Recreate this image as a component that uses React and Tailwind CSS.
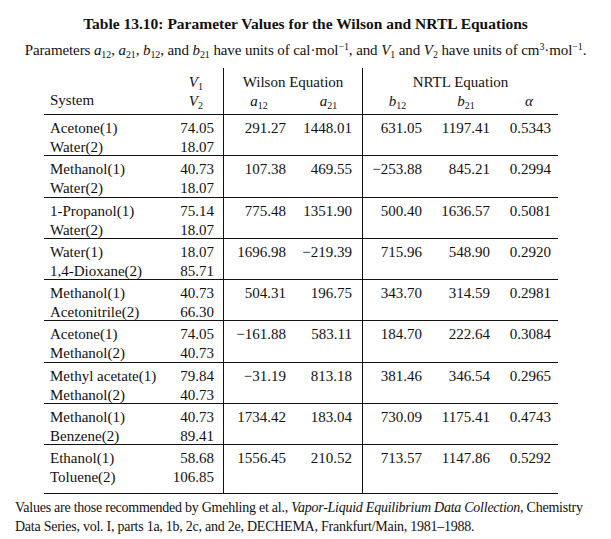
const ROWS = [
  { sys: ['Acetone(1)', 'Water(2)'], v: ['74.05', '18.07'], vals: ['291.27', '1448.01', '631.05', '1197.41', '0.5343'] },
  { sys: ['Methanol(1)', 'Water(2)'], v: ['40.73', '18.07'], vals: ['107.38', '469.55', '−253.88', '845.21', '0.2994'] },
  { sys: ['1-Propanol(1)', 'Water(2)'], v: ['75.14', '18.07'], vals: ['775.48', '1351.90', '500.40', '1636.57', '0.5081'] },
  { sys: ['Water(1)', '1,4-Dioxane(2)'], v: ['18.07', '85.71'], vals: ['1696.98', '−219.39', '715.96', '548.90', '0.2920'] },
  { sys: ['Methanol(1)', 'Acetonitrile(2)'], v: ['40.73', '66.30'], vals: ['504.31', '196.75', '343.70', '314.59', '0.2981'] },
  { sys: ['Acetone(1)', 'Methanol(2)'], v: ['74.05', '40.73'], vals: ['−161.88', '583.11', '184.70', '222.64', '0.3084'] },
  { sys: ['Methyl acetate(1)', 'Methanol(2)'], v: ['79.84', '40.73'], vals: ['−31.19', '813.18', '381.46', '346.54', '0.2965'] },
  { sys: ['Methanol(1)', 'Benzene(2)'], v: ['40.73', '89.41'], vals: ['1734.42', '183.04', '730.09', '1175.41', '0.4743'] },
  { sys: ['Ethanol(1)', 'Toluene(2)'], v: ['58.68', '106.85'], vals: ['1556.45', '210.52', '713.57', '1147.86', '0.5292'] },
];

// right padding of each value column, so numbers end where the print has them
const VAL_PAD = ['pr-[8px]', 'pr-[10px] border-r border-[#111]', 'pr-[10px]', 'pr-[10px]', 'pr-[7px]'];

const GRID = 'grid grid-cols-[116px_64px_70px_69px_69px_68px_58px]';

function Sym({ base, sub }) {
  return (
    <span>
      <i>{base}</i>
      <sub className="text-[10px] not-italic">{sub}</sub>
    </span>
  );
}

export default function App() {
  return (
    <div className="min-h-[539px] w-[611px] bg-white pt-[14px] text-[#111] font-['Liberation_Serif',serif]">
      <h1 className="text-center text-[15.5px] font-bold leading-[20px]">
        Table 13.10: Parameter Values for the Wilson and NRTL Equations
      </h1>
      <p className="mt-[6px] text-center text-[15px] leading-[20px] tracking-[-0.1px]">
        Parameters <Sym base="a" sub="12" />, <Sym base="a" sub="21" />, <Sym base="b" sub="12" />, and{' '}
        <Sym base="b" sub="21" /> have units of cal·mol<sup className="text-[10px]">−1</sup>, and{' '}
        <Sym base="V" sub="1" /> and <Sym base="V" sub="2" /> have units of cm
        <sup className="text-[10px]">3</sup>·mol<sup className="text-[10px]">−1</sup>.
      </p>

      {/* Table */}
      <div className="ml-[44px] mt-[8px] w-[514px] text-[15px] leading-[19px]">
        {/* Header */}
        <div className={`${GRID} h-[47px] border-b border-[#111]`}>
          <div className="flex flex-col justify-end pb-[4px] pl-[6px]">System</div>
          <div className="flex flex-col items-end border-r border-[#111] pr-[20px] pt-[5px]">
            <Sym base="V" sub="1" />
            <Sym base="V" sub="2" />
          </div>
          <div className="col-span-2 flex flex-col border-r border-[#111] pt-[5px]">
            <div className="text-center">Wilson Equation</div>
            <div className="grid grid-cols-[70px_69px] text-center">
              <Sym base="a" sub="12" />
              <Sym base="a" sub="21" />
            </div>
          </div>
          <div className="col-span-3 flex flex-col pt-[5px]">
            <div className="text-center">NRTL Equation</div>
            <div className="grid grid-cols-[69px_68px_58px] text-center">
              <Sym base="b" sub="12" />
              <Sym base="b" sub="21" />
              <i>α</i>
            </div>
          </div>
        </div>

        {/* Body */}
        {ROWS.map((row, i) => {
          const last = i === ROWS.length - 1;
          return (
            <div
              key={i}
              className={`${GRID} border-b border-[#111] ${last ? 'h-[49px]' : 'h-[41.3px]'}`}
            >
              <div className="pl-[6px] pt-[4px] whitespace-nowrap">
                <div>{row.sys[0]}</div>
                <div>{row.sys[1]}</div>
              </div>
              <div className="border-r border-[#111] pr-[9px] pt-[4px] text-right">
                <div>{row.v[0]}</div>
                <div>{row.v[1]}</div>
              </div>
              {row.vals.map((val, j) => (
                <div key={j} className={`pt-[4px] text-right ${VAL_PAD[j]}`}>
                  {val}
                </div>
              ))}
            </div>
          );
        })}
      </div>

      <p className="mt-[4px] pl-[15px] pr-[12px] text-[14px] leading-[19px] tracking-[-0.25px]">
        Values are those recommended by Gmehling et al., <i>Vapor-Liquid Equilibrium Data Collection</i>, Chemistry
        Data Series, vol. I, parts 1a, 1b, 2c, and 2e, DECHEMA, Frankfurt/Main, 1981–1988.
      </p>
    </div>
  );
}
